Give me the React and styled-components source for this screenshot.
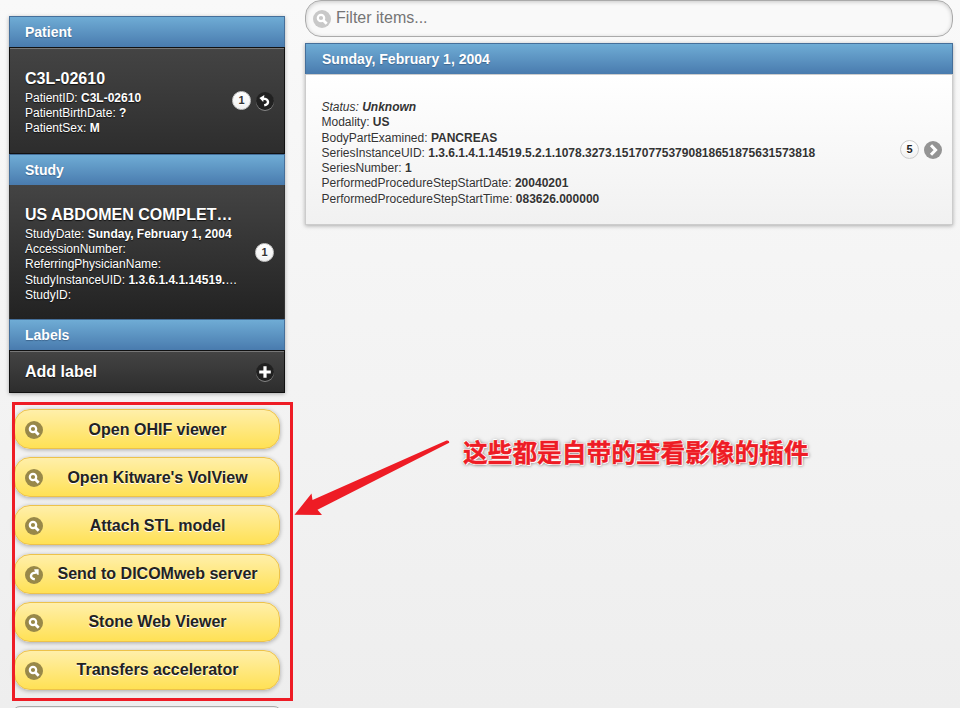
import React from "react";
import styled, { createGlobalStyle } from "styled-components";

const GlobalStyle = createGlobalStyle`
  * {
    box-sizing: border-box;
  }
  body {
    margin: 0;
    overflow: hidden;
    font-family: "Liberation Sans", Arial, Helvetica, sans-serif;
  }
`;

const patientTags = [
  { name: "PatientID", value: "C3L-02610" },
  { name: "PatientBirthDate", value: "?" },
  { name: "PatientSex", value: "M" },
];

const studyTags = [
  { name: "StudyDate", value: "Sunday, February 1, 2004" },
  { name: "AccessionNumber", value: "" },
  { name: "ReferringPhysicianName", value: "" },
  { name: "StudyInstanceUID", value: "1.3.6.1.4.1.14519.", more: true },
  { name: "StudyID", value: "" },
];

const seriesTags = [
  { name: "Status", value: "Unknown", italic: true },
  { name: "Modality", value: "US" },
  { name: "BodyPartExamined", value: "PANCREAS" },
  {
    name: "SeriesInstanceUID",
    value: "1.3.6.1.4.1.14519.5.2.1.1078.3273.151707753790818651875631573818",
  },
  { name: "SeriesNumber", value: "1" },
  { name: "PerformedProcedureStepStartDate", value: "20040201" },
  { name: "PerformedProcedureStepStartTime", value: "083626.000000" },
];

const plugins = [
  { label: "Open OHIF viewer", icon: "search" },
  { label: "Open Kitware's VolView", icon: "search" },
  { label: "Attach STL model", icon: "search" },
  { label: "Send to DICOMweb server", icon: "forward" },
  { label: "Stone Web Viewer", icon: "search" },
  { label: "Transfers accelerator", icon: "search" },
];

// White glyphs, drawn on an 18px round badge
const glyphs = {
  search: (
    <>
      <circle cx="8" cy="8" r="3.2" strokeWidth="2.2" />
      <path d="M10.4 10.4 L13.7 13.7" strokeWidth="2.8" />
    </>
  ),
  forward: (
    <>
      <path d="M9.8 13.3 C4 11.9 5.2 6.6 11 6.6" strokeWidth="2.4" />
      <path d="M9.2 3.2 H13.6 V9 L12 8.6 L9.6 5 Z" fill="#fff" stroke="none" />
    </>
  ),
  back: (
    <>
      <path d="M8.2 13.3 C14 11.9 12.8 6.6 7 6.6" strokeWidth="2.4" />
      <path d="M8.4 3 L3.4 6 L7.2 10 Z" fill="#fff" stroke="none" />
    </>
  ),
  plus: <path d="M9 3.2 V14.8 M3.2 9 H14.8" strokeWidth="3.2" />,
  arrow: <path d="M7 4.2 L11.6 9 L7 13.8" strokeWidth="3" />,
};

function Icon({ type, tone }) {
  return (
    <IconDisc $tone={tone}>
      <svg width="18" height="18" viewBox="0 0 18 18" fill="none" stroke="#fff">
        {glyphs[type]}
      </svg>
    </IconDisc>
  );
}

function Tags({ tags }) {
  return tags.map((tag) => (
    <Tag key={tag.name} $italic={tag.italic}>
      {tag.name}: <strong>{tag.value}</strong>
      {tag.more && "…"}
    </Tag>
  ));
}

export default function App() {
  return (
    <>
      <GlobalStyle />
      <Page>
        <Sidebar>
          <List>
            <Divider>Patient</Divider>
            <DarkItem $height={107} $framed>
              <Details $drop={4}>
                <Title>C3L-02610</Title>
                <Tags tags={patientTags} />
              </Details>
              <Aside>
                <Count>1</Count>
                <Icon type="back" tone="dark" />
              </Aside>
            </DarkItem>
            <Divider>Study</Divider>
            <DarkItem $height={134}>
              <Details $drop={4}>
                <Title>US ABDOMEN COMPLET…</Title>
                <Tags tags={studyTags} />
              </Details>
              <Aside>
                <Count>1</Count>
              </Aside>
            </DarkItem>
            <Divider>Labels</Divider>
            <DarkItem $height={43} $framed>
              <Title $single>Add label</Title>
              <Aside>
                <Icon type="plus" tone="dark" />
              </Aside>
            </DarkItem>
          </List>
          <Buttons>
            {plugins.map((plugin) => (
              <PluginButton key={plugin.label}>
                <Icon type={plugin.icon} tone="yellow" />
                <span>{plugin.label}</span>
              </PluginButton>
            ))}
          </Buttons>
          <NextPanel />
        </Sidebar>
        <Main>
          <Filter>
            <Icon type="search" tone="pale" />
            <input placeholder="Filter items..." />
          </Filter>
          <List>
            <Divider $wide>Sunday, February 1, 2004</Divider>
            <SeriesItem>
              <Details $drop={8}>
                <Tags tags={seriesTags} />
              </Details>
              <Aside>
                <Count $light>5</Count>
                <Icon type="arrow" tone="gray" />
              </Aside>
            </SeriesItem>
          </List>
        </Main>
        {/* Annotations that lie over the page */}
        <Highlight />
        <Pointer width="160" height="80" viewBox="0 0 160 80">
          <path
            d="M4.5 74.8 L21.5 53.5 L22.5 60 L156.5 0.6 Q159.5 0.2 159.2 2.8 L27.5 69.8 L32 75 Z"
            fill="#ee1c25"
          />
        </Pointer>
        <Note>这些都是自带的查看影像的插件</Note>
      </Page>
    </>
  );
}

const Page = styled.div`
  position: relative;
  display: flex;
  align-items: flex-start;
  gap: 20px;
  height: 708px;
  padding: 0 7px 0 9px;
  overflow: hidden;
  background: linear-gradient(#f9f9f9, #eee);
`;

const Sidebar = styled.div`
  width: 276px;
  flex: none;
  padding-top: 16px;
`;

const Main = styled.div`
  flex: 1;
  min-width: 0;
`;

const List = styled.div`
  box-shadow: 0 1px 4px rgba(0, 0, 0, 0.3);
`;

const Divider = styled.div`
  height: 31px;
  padding: 0 ${(props) => (props.$wide ? "16px" : "15px")};
  border: 1px solid #456f9a;
  border-bottom: none;
  background: linear-gradient(#6facd5, #497bae);
  color: #fff;
  font-size: 14px;
  font-weight: bold;
  line-height: 31px;
  text-shadow: 0 1px 1px #3e6790;
`;

const DarkItem = styled.div`
  display: flex;
  align-items: center;
  height: ${(props) => props.$height}px;
  padding: 0 10px 0 15px;
  border: 1px solid ${(props) => (props.$framed ? "#111" : "#333")};
  border-width: ${(props) => (props.$framed ? "1px" : "0 1px")};
  box-shadow: ${(props) => (props.$framed ? "inset 0 1px 0 #777" : "none")};
  background: ${(props) =>
    props.$framed
      ? "linear-gradient(#444, #2d2d2d)"
      : "linear-gradient(#444, #222)"};
  color: #fff;
  text-shadow: 0 1px 1px #111;
`;

const SeriesItem = styled.div`
  display: flex;
  align-items: center;
  height: 151px;
  padding: 0 10px 0 15.5px;
  border: 1px solid #ccc;
  background: linear-gradient(#fff, #f1f1f1);
  color: #333;
  text-shadow: 0 1px 0 #fff;
`;

const Details = styled.div`
  flex: 1;
  min-width: 0;
  max-width: 500px;
  padding-top: ${(props) => props.$drop}px;
`;

const Title = styled.h3`
  flex: 1;
  margin: 0;
  padding-bottom: ${(props) => (props.$single ? "0" : "3px")};
  font-size: 16px;
  line-height: 19px;
  white-space: nowrap;
`;

const Tag = styled.p`
  margin: 0;
  font-size: 12px;
  font-style: ${(props) => (props.$italic ? "italic" : "normal")};
  line-height: 15.25px;
  white-space: nowrap;
`;

const Aside = styled.div`
  display: flex;
  align-items: center;
  gap: 5px;
  margin-left: auto;
`;

const Count = styled.span`
  width: 19px;
  height: 19px;
  border: 1px solid #ccc;
  border-radius: 50%;
  background: linear-gradient(#fff, #f1f1f1);
  color: ${(props) => (props.$light ? "#222" : "#333")};
  font-size: 11px;
  font-weight: bold;
  line-height: 17px;
  text-align: center;
  text-shadow: 0 1px 0 #fff;
`;

const tones = {
  dark: "background: #212121; box-shadow: 0 1px 0 rgba(255, 255, 255, 0.4);",
  yellow: "background: #988849;",
  pale: "background: #c8c8c8;",
  gray: "background: #949494;",
};

const IconDisc = styled.span`
  display: block;
  flex: none;
  width: 18px;
  height: 18px;
  margin-top: 1px;
  border-radius: 50%;
  ${(props) => tones[props.$tone]}
  svg {
    display: block;
  }
`;

const Buttons = styled.div`
  display: flex;
  flex-direction: column;
  gap: 8.2px;
  padding: 16px 5px 0;
`;

const PluginButton = styled.button`
  display: flex;
  align-items: center;
  height: 40px;
  padding: 1px 18px 0 10px;
  border: 1px solid #edc24a;
  border-radius: 16px;
  background: linear-gradient(#ffefaa, #ffe155);
  box-shadow: 0 1px 4px rgba(0, 0, 0, 0.3);
  color: #222;
  font-family: inherit;
  font-size: 16px;
  font-weight: bold;
  text-shadow: 0 1px 0 #fff;
  > span:last-child {
    flex: 1;
    padding-left: 11px;
    text-align: center;
    white-space: nowrap;
  }
`;

const NextPanel = styled.div`
  height: 40px;
  margin: 16px 3px 0;
  border: 1px solid #aaa;
  border-radius: 8px;
  background: #eee;
`;

const Filter = styled.div`
  display: flex;
  align-items: center;
  gap: 5px;
  height: 37px;
  margin-bottom: 6px;
  padding: 0 7px;
  border: 1px solid #aaa;
  border-radius: 16px;
  background: #f9f9f9;
  box-shadow: inset 0 1px 4px rgba(0, 0, 0, 0.2);
  input {
    flex: 1;
    padding: 0 0 2px;
    border: none;
    outline: none;
    background: none;
    font-family: inherit;
    font-size: 16px;
  }
  input::placeholder {
    color: #757575;
  }
`;

const Highlight = styled.div`
  position: absolute;
  left: 12px;
  top: 402px;
  width: 281px;
  height: 299px;
  border: 3px solid #ee1c25;
`;

const Pointer = styled.svg`
  position: absolute;
  left: 290px;
  top: 440px;
`;

const Note = styled.div`
  position: absolute;
  left: 463px;
  top: 436px;
  color: #ee1c25;
  font-family: "Liberation Sans", "Noto Sans CJK SC", sans-serif;
  font-size: 24.7px;
  font-weight: bold;
  line-height: 36px;
  white-space: nowrap;
  -webkit-text-stroke: 0.4px #ee1c25;
  text-shadow: 1px 0 #fff, -1px 0 #fff, 0 1px #fff, 0 -1px #fff, 1px 1px #fff,
    -1px -1px #fff, 0 0 4px #777, 1px 1px 3px #888;
`;
